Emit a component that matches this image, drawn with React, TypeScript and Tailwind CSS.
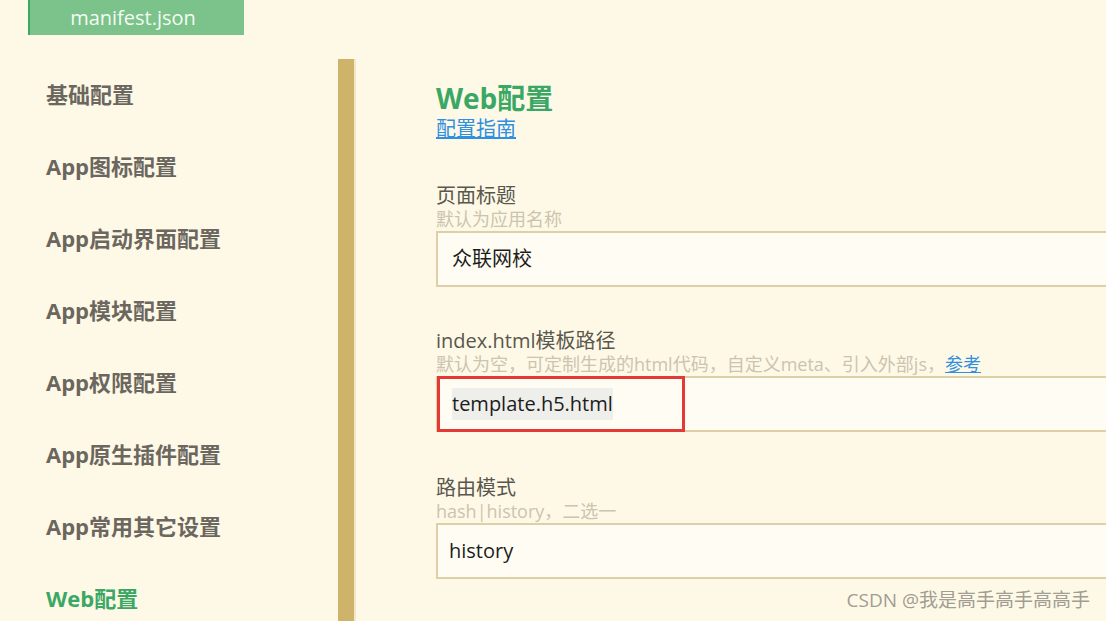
const menu = [
  '基础配置',
  'App图标配置',
  'App启动界面配置',
  'App模块配置',
  'App权限配置',
  'App原生插件配置',
  'App常用其它设置',
];

const font = "font-['Open_Sans','Noto_Sans_CJK_SC',sans-serif]";

export default function App() {
  return (
    <div className={`relative h-[621px] w-full overflow-hidden bg-[#fef9e7] ${font}`}>
      <div className="pl-[28px]">
        <div className="flex h-[35px] w-[216px] items-center justify-center border-l-2 border-[#3ca862] bg-[#7bc28b] pr-[8px] text-[20px] text-[#f4fbf1]">
          manifest.json
        </div>
      </div>

      <div className="mt-[24px] flex h-[562px]">
        <div className="-mt-[1px] w-[338px] shrink-0 pl-[46px]">
          {menu.map((m) => (
            <div key={m} className="flex h-[72px] items-center text-[22px] font-bold text-[#6b675e]">
              {m}
            </div>
          ))}
          <div className="flex h-[72px] items-center text-[22px] font-bold text-[#3aa864]">Web配置</div>
        </div>
        <div className="w-[16px] shrink-0 bg-[#cdb46a]" />
        <div className="w-[2px] shrink-0 bg-[#f2e8c9]" />

        <div className="min-w-0 flex-1 pl-[80px] pt-[22px]">
          <div className="h-[34px] text-[28px] font-bold leading-[34px] text-[#3aa864]">Web配置</div>
          <a className="mt-[1px] block h-[26px] w-fit text-[20px] leading-[26px] text-[#2f8fe0] underline">配置指南</a>

          <Field gap="mt-[42px]" label="页面标题" hint={<>默认为应用名称</>} value="众联网校" />
          <Field
            gap="mt-[42px]"
            label="index.html模板路径"
            hint={
              <>
                默认为空，可定制生成的html代码，自定义meta、引入外部js，
                <span className="text-[#2f8fe0] underline">参考</span>
              </>
            }
            value={<span className="bg-[#eeeeea] py-[1px]">template.h5.html</span>}
            marked
          />
          <Field gap="mt-[44px]" label="路由模式" hint={<>hash|history，二选一</>} value="history" tight />
        </div>
      </div>

      <div className="absolute right-[16px] bottom-[7px] text-[19px] text-[#a29d92]">CSDN @我是高手高手高高手</div>
    </div>
  );
}

function Field({
  gap,
  label,
  hint,
  value,
  marked,
  tight,
}: {
  gap: string;
  label: string;
  hint: React.ReactNode;
  value: React.ReactNode;
  marked?: boolean;
  tight?: boolean;
}) {
  return (
    <div className={gap}>
      <div className="h-[24px] text-[20px] leading-[24px] text-[#5a574d]">{label}</div>
      <div className="h-[23px] text-[18px] leading-[22px] text-[#cbc4ae]">{hint}</div>
      <div className="relative">
        <div
          className={`flex h-[56px] w-[760px] items-center border-2 border-[#ddd0a6] bg-[#fffcf3] text-[20px] text-[#1c1c1c] ${
            tight ? 'pl-[11px]' : 'pl-[14px]'
          }`}
        >
          {value}
        </div>
        {marked && <div className="absolute top-0 left-[1px] h-[56px] w-[248px] border-[3px] border-[#e53935]" />}
      </div>
    </div>
  );
}
